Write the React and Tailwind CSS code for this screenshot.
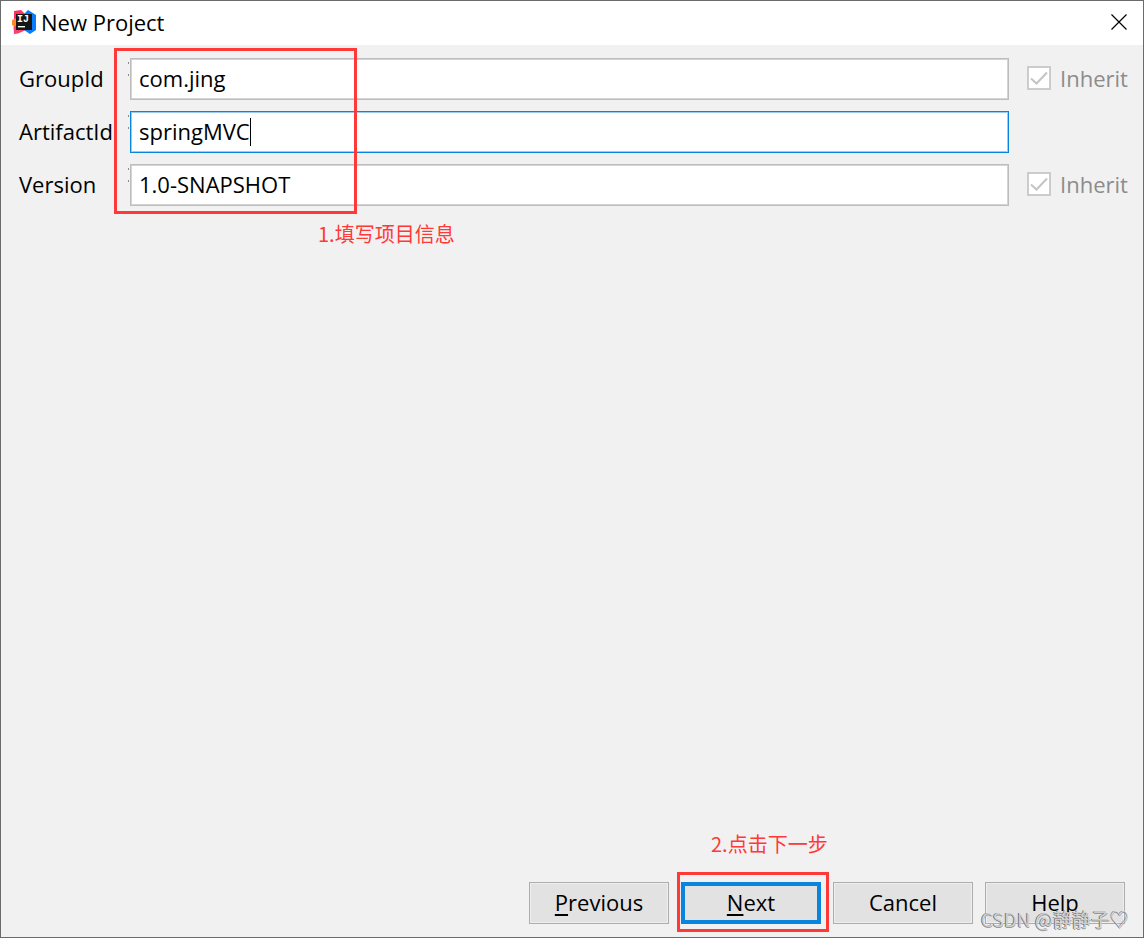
import React, { useState } from "react";

const AppLogo = () => (
  <svg viewBox="0 0 24 24" className="w-6 h-6" aria-hidden="true">
    <path d="M2 1 L9 0 L14 5 L9 14 L2 9 Z" fill="#fe2e63" />
    <path d="M0 10 L5 8 L8 16 L3 18 L0 14.5 Z" fill="#fc8b27" />
    <path d="M1.5 17 L8 13 L14 20 L6 23.5 L2 24 Z" fill="#f9406b" />
    <path d="M12 4 L16 0 L24 5 V20 L18 24 L12 20 Z" fill="#087cfa" />
    <rect x="4" y="4" width="16" height="16" fill="#161616" />
    <text x="5" y="12" fill="#fff" fontSize="10" fontWeight="bold" fontFamily="Liberation Mono, monospace">IJ</text>
    <rect x="6" y="16" width="7" height="1.4" fill="#fff" />
  </svg>
);

const Field = ({ id, label, value, onChange, active, inherit }) => (
  <div className="flex items-center h-[42px]">
    <label htmlFor={id} className="w-[111px] shrink-0 pb-[2px]">{label}</label>
    <div className="relative flex-1">
      <span className="absolute -left-[2px] top-1 h-[14px] w-px border-y-2 border-[#8a8a8a]" />
      <input
        id={id}
        type="text"
        value={value}
        onChange={(e) => onChange(id, e.target.value)}
        className={
          active
            ? "block w-full h-[42px] px-2 pb-[2px] bg-white border border-[#0a84dc] outline-1 -outline-offset-2 outline-[#9accf2]"
            : "block w-full h-[42px] px-2 pb-[2px] bg-white border border-[#bdbdbd] outline-1 -outline-offset-2 outline-[#d4d4d4]"
        }
      />
      {active && <span className="absolute left-[120px] top-[7px] w-px h-7 bg-black" />}
    </div>
    <div className="w-[134px] shrink-0 pl-[18px]">
      {inherit && (
        <label className="flex items-center gap-[9px] pb-[2px] text-[#8c8c8c]">
          <span className="relative w-6 h-6">
            <input
              type="checkbox"
              defaultChecked
              disabled
              className="block appearance-none w-6 h-6 bg-white border-2 border-[#cccccc]"
            />
            <svg viewBox="0 0 24 24" className="absolute inset-0 w-6 h-6" fill="none" stroke="#c4c4c4" strokeWidth="2">
              <path d="M4 12.5 L9.5 17.5 L20 6.5" />
            </svg>
          </span>
          Inherit
        </label>
      )}
    </div>
  </div>
);

const buttonClass = "w-[140px] h-[42px] pb-[2px] bg-[#e2e2e2] border border-[#adadad] outline-1 -outline-offset-2 outline-[#eeeeee]";

export default function App() {
  const [project, setProject] = useState({
    groupId: "com.jing",
    artifactId: "springMVC",
    version: "1.0-SNAPSHOT",
  });

  const update = (id, value) => setProject({ ...project, [id]: value });

  return (
    <div className="relative flex flex-col min-h-screen bg-[#f1f1f1] border border-[#6b6b6b] text-[22px] leading-7 text-black font-['Open_Sans','Noto_Sans_CJK_SC',sans-serif]">
      {/* Title bar */}
      <header className="flex items-center h-11 pb-[2px] pl-[11px] pr-4 bg-white">
        <AppLogo />
        <h1 className="ml-[5px]">New Project</h1>
        <button aria-label="Close" className="ml-auto">
          <svg viewBox="0 0 16 16" className="w-4 h-4" stroke="#000" strokeWidth="1.2">
            <path d="M.5 .5 L15.5 15.5 M15.5 .5 L.5 15.5" />
          </svg>
        </button>
      </header>

      {/* Project coordinates */}
      <main className="flex-1">
        <form className="relative flex flex-col gap-[11px] pt-[13px] pl-[18px]">
          <Field id="groupId" label="GroupId" value={project.groupId} onChange={update} inherit />
          <Field id="artifactId" label="ArtifactId" value={project.artifactId} onChange={update} active />
          <Field id="version" label="Version" value={project.version} onChange={update} inherit />
          <div className="absolute left-[113px] top-[3px] w-[243px] h-[166px] border-3 border-[#ff3838] pointer-events-none" />
        </form>
        <p className="pt-[14px] pl-[317px] text-xl text-[#ff3838] font-['Noto_Sans_CJK_SC',sans-serif]">1.填写项目信息</p>
      </main>

      <footer className="flex justify-end gap-3 pr-[18px] pb-[13px]">
        <button className={buttonClass}><u className="underline-offset-3">P</u>revious</button>
        <div className="relative">
          <p className="absolute left-[30px] -top-[52px] whitespace-nowrap text-xl text-[#ff3838] font-['Noto_Sans_CJK_SC',sans-serif]">2.点击下一步</p>
          <button className="w-[140px] h-[42px] pb-[2px] bg-[#e2e2e2] border-4 border-[#0a84dc]"><u className="underline-offset-3">N</u>ext</button>
          <div className="absolute -left-1 -right-2 -top-[10px] -bottom-2 border-3 border-[#ff3838] pointer-events-none" />
        </div>
        <button className={buttonClass}>Cancel</button>
        <button className={buttonClass}>Help</button>
      </footer>

      <p className="absolute right-[14px] bottom-1 text-[19px] text-[#f4f4f4]/70 [text-shadow:-1px_0_0_#777,0_1px_0_#999] font-['Noto_Sans_CJK_SC',sans-serif] pointer-events-none">
        CSDN @静静子♡
      </p>
    </div>
  );
}
